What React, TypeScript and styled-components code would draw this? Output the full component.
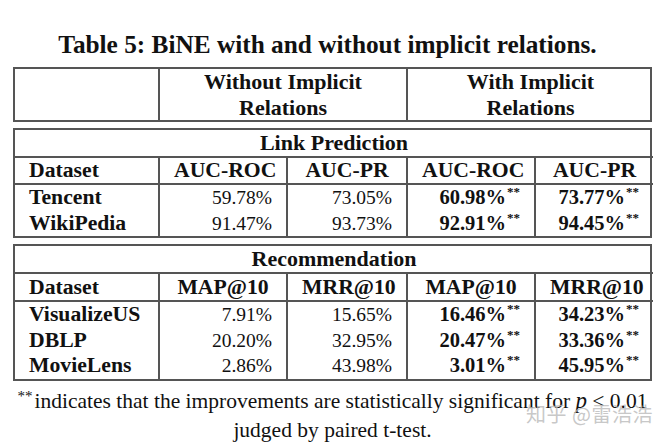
import React from "react";
import styled, { createGlobalStyle } from "styled-components";

const GlobalStyle = createGlobalStyle`
  html, body {
    margin: 0;
    padding: 0;
    background: #ffffff;
  }
  body {
    font-family: "Liberation Serif", "Times New Roman", serif;
    color: #111111;
  }
`;

const LINE = "2px solid #555555";
const COLS = "143px 128px 120px 128px 119px";

const Page = styled.div`
  position: relative;
  width: 665px;
  height: 445px;
  box-sizing: border-box;
  padding: 30px 0 0 13px;
  overflow: hidden;
`;

const Title = styled.h1`
  margin: 0 0 9px;
  width: 629px;
  text-align: center;
  font-size: 25.3px;
  line-height: 28px;
  font-weight: 700;
  white-space: nowrap;
`;

const Block = styled.div`
  display: grid;
  grid-template-columns: ${COLS};
  width: 639px;
  box-sizing: border-box;
  border: ${LINE};
  margin-bottom: 6px;
`;

const GroupHead = styled.div<{ $span: number; $first?: boolean }>`
  grid-column: span ${(p) => p.$span};
  border-left: ${(p) => (p.$first ? "none" : LINE)};
  text-align: center;
  font-size: 22px;
  font-weight: 700;
  line-height: 25.5px;
`;

const Caption = styled.div`
  grid-column: 1 / -1;
  height: 26px;
  border-bottom: ${LINE};
  text-align: center;
  font-size: 22px;
  font-weight: 700;
  line-height: 26px;
`;

const Cell = styled.div<{
  $first?: boolean;
  $head?: boolean;
  $bold?: boolean;
  $h: number;
}>`
  height: ${(p) => p.$h}px;
  line-height: ${(p) => p.$h}px;
  box-sizing: content-box;
  border-left: ${(p) => (p.$first ? "none" : LINE)};
  border-bottom: ${(p) => (p.$head ? LINE : "none")};
  padding: 0 14px;
  white-space: nowrap;
  font-size: ${(p) => (p.$head || p.$first ? "21.7px" : p.$bold ? "20.5px" : "19.5px")};
  font-weight: ${(p) => (p.$bold || p.$head || p.$first ? 700 : 400)};
  text-align: ${(p) => (p.$first ? "left" : p.$head ? "center" : "right")};
`;

const Stars = styled.sup`
  font-size: 13px;
  line-height: 0;
  vertical-align: 0;
  position: relative;
  top: -8px;
  margin-left: 1px;
`;

const Footer = styled.div`
  width: 639px;
  margin-top: 1px;
  text-align: center;
  font-size: 21.5px;
  line-height: 27px;
  white-space: nowrap;
`;

const FootStars = styled.span`
  font-size: 15px;
  position: relative;
  top: -7px;
  margin-right: 2px;
`;

const Italic = styled.i`
  font-size: 23px;
`;

const Watermark = styled.div`
  position: absolute;
  left: 526px;
  top: 401px;
  font-family: "Noto Sans CJK SC", sans-serif;
  font-size: 20px;
  line-height: 26px;
  color: rgba(185, 185, 185, 0.8);
  letter-spacing: 0.5px;
  pointer-events: none;
`;

type Row = { name: string; base: string[]; ours: string[] };

const linkRows: Row[] = [
  { name: "Tencent", base: ["59.78%", "73.05%"], ours: ["60.98%", "73.77%"] },
  { name: "WikiPedia", base: ["91.47%", "93.73%"], ours: ["92.91%", "94.45%"] },
];

const recRows: Row[] = [
  { name: "VisualizeUS", base: ["7.91%", "15.65%"], ours: ["16.46%", "34.23%"] },
  { name: "DBLP", base: ["20.20%", "32.95%"], ours: ["20.47%", "33.36%"] },
  { name: "MovieLens", base: ["2.86%", "43.98%"], ours: ["3.01%", "45.95%"] },
];

const Section: React.FC<{ title: string; metrics: string[]; rows: Row[]; headH: number; rowH: number }> = ({
  title,
  metrics,
  rows,
  headH,
  rowH,
}) => (
  <Block>
    <Caption>{title}</Caption>
    <Cell $first $head $h={headH}>
      Dataset
    </Cell>
    {[...metrics, ...metrics].map((m, i) => (
      <Cell key={i} $head $h={headH}>
        {m}
      </Cell>
    ))}
    {rows.map((r) => (
      <React.Fragment key={r.name}>
        <Cell $first $h={rowH}>
          {r.name}
        </Cell>
        {r.base.map((v) => (
          <Cell key={v} $h={rowH}>
            {v}
          </Cell>
        ))}
        {r.ours.map((v) => (
          <Cell key={v} $bold $h={rowH}>
            {v}
            <Stars>**</Stars>
          </Cell>
        ))}
      </React.Fragment>
    ))}
  </Block>
);

export default function App() {
  return (
    <Page>
      <GlobalStyle />
      <Title>Table 5: BiNE with and without implicit relations.</Title>
      <Block>
        <GroupHead $span={1} $first />
        <GroupHead $span={2}>
          Without Implicit
          <br />
          Relations
        </GroupHead>
        <GroupHead $span={2}>
          With Implicit
          <br />
          Relations
        </GroupHead>
      </Block>
      <Section title="Link Prediction" metrics={["AUC-ROC", "AUC-PR"]} rows={linkRows} headH={25} rowH={25.5} />
      <Section title="Recommendation" metrics={["MAP@10", "MRR@10"]} rows={recRows} headH={26} rowH={25.67} />
      <Footer>
        <FootStars>**</FootStars>indicates that the improvements are statistically significant for <Italic>p</Italic>{" "}
        &lt; 0.01
        <br />
        judged by paired t-test.
      </Footer>
      <Watermark>知乎 @雷浩浩</Watermark>
    </Page>
  );
}
